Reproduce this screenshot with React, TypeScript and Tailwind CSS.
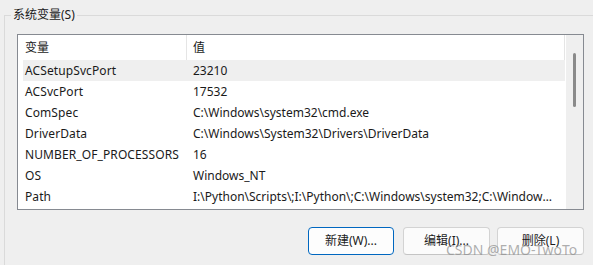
const rows = [
  { name: 'ACSetupSvcPort', value: '23210' },
  { name: 'ACSvcPort', value: '17532' },
  { name: 'ComSpec', value: 'C:\\Windows\\system32\\cmd.exe' },
  { name: 'DriverData', value: 'C:\\Windows\\System32\\Drivers\\DriverData' },
  { name: 'NUMBER_OF_PROCESSORS', value: '16' },
  { name: 'OS', value: 'Windows_NT' },
  {
    name: 'Path',
    value: 'I:\\Python\\Scripts\\;I:\\Python\\;C:\\Windows\\system32;C:\\Windows;C:\\Windows\\System32\\Wbem',
  },
];

function VariableList() {
  return (
    <div className="flex h-[176px] border border-[#868a91] bg-white">
      <div className="flex w-[547px] flex-col">
        <div className="flex h-[25px] shrink-0 items-center border-r border-[#e5e5e5]">
          <div className="flex h-full w-[169px] items-center border-r border-[#e5e5e5] pl-[7px]">变量</div>
          <div className="pl-[6px]">值</div>
        </div>
        <div className="ml-[5px] flex flex-col">
          {rows.map((row, i) => (
            <div
              key={row.name}
              className={`flex h-[21px] items-center leading-[21px] ${i === 0 ? 'bg-[#efefef]' : ''}`}
            >
              <div className="w-[164px] shrink-0 truncate pl-[2px] tracking-[0.1px]">{row.name}</div>
              <div className="min-w-0 flex-1 truncate pl-[6px] pr-[8px]">{row.value}</div>
            </div>
          ))}
        </div>
      </div>
      <div className="ml-[1px] w-[17px] bg-[#efefef]">
        <div className="ml-[7px] mt-[18px] h-[54px] w-[3px] rounded-full bg-[#8a8a8a]" />
      </div>
    </div>
  );
}

function DialogButton({ label, width, primary }: { label: string; width: string; primary?: boolean }) {
  return (
    <button
      className={`${width} h-[28px] shrink-0 rounded-[4px] border text-[12px] text-[#1b1b1b] ${
        primary ? 'border-[#0067c0] bg-[#fdfdfd]' : 'border-[#d3d3d3] border-b-[#c4c4c4] bg-[#fbfbfb]'
      }`}
    >
      {label}
    </button>
  );
}

export default function App() {
  return (
    <div
      className="relative h-[265px] w-[593px] overflow-hidden bg-[#efefef] text-[12px] text-[#1a1a1a]"
      style={{ fontFamily: '"Noto Sans", "Noto Sans CJK SC", sans-serif' }}
    >
      <fieldset className="ml-[4px] mt-[7px] h-[300px] w-[620px] border-l border-t border-[#dadada]">
        <legend className="ml-[6px] px-[2px] leading-[16px]">系统变量(S)</legend>
        <div className="ml-[12px] mt-[11px] w-[567px]">
          <VariableList />
          <div className="mt-[17px] flex justify-end">
            <DialogButton label="新建(W)..." width="w-[86px]" primary />
            <div className="w-[9px] shrink-0" />
            <DialogButton label="编辑(I)..." width="w-[87px]" />
            <div className="w-[7px] shrink-0" />
            <DialogButton label="删除(L)" width="w-[87px]" />
          </div>
        </div>
      </fieldset>
      <span className="pointer-events-none absolute left-[446px] top-[240px] whitespace-nowrap text-[14px] leading-[20px] text-[#8c8c8c]/70">
        CSDN @EMO-TwoTo
      </span>
    </div>
  );
}
